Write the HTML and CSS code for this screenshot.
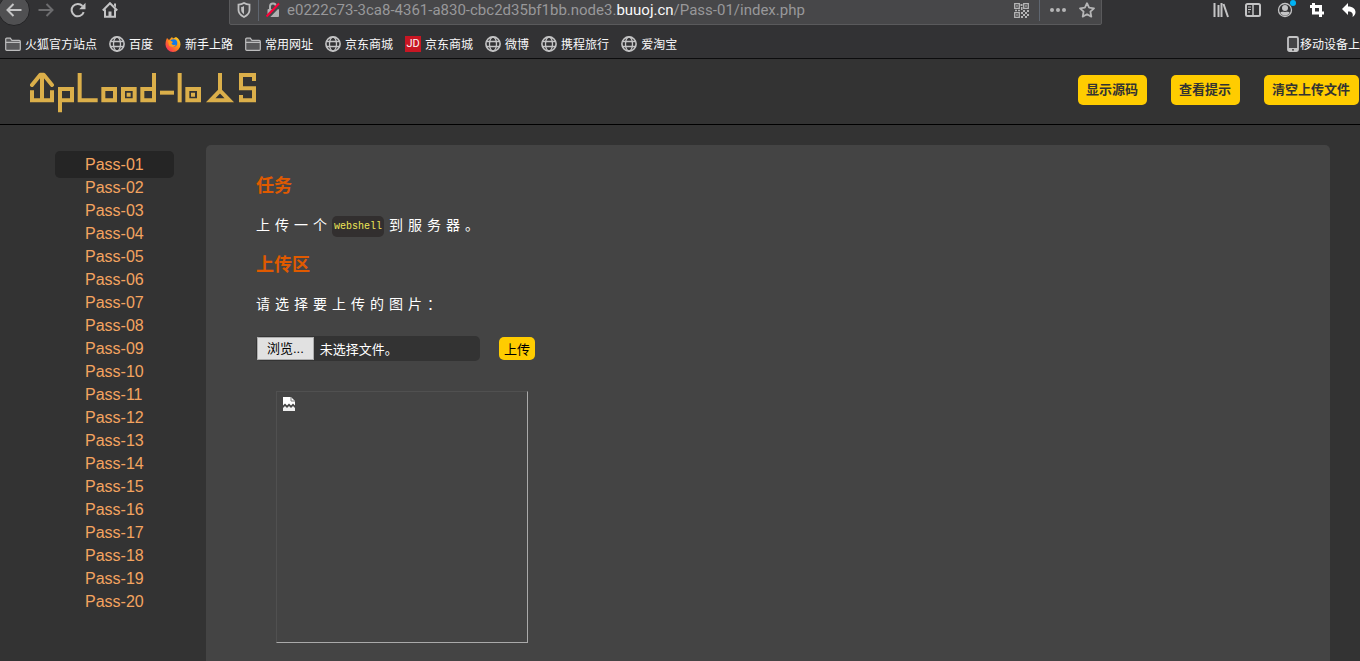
FILE: index.html
```
<!DOCTYPE html>
<html lang="zh-CN">
<head>
    <meta charset="UTF-8">
    <meta name="viewport" content="width=device-width, initial-scale=1.0">
    <title>upload-labs</title>
    <link rel="stylesheet" href="styles.css">
</head>
<body>
    <!-- shared icons -->
    <svg class="sprite" xmlns="http://www.w3.org/2000/svg">
        <symbol id="folder" viewBox="0 0 16 16">
            <path d="M.7 13.3V3.2a1 1 0 0 1 1-1h3.6l1.6 2.2h7.4a1 1 0 0 1 1 1v7.9a1 1 0 0 1-1 1H1.700a1 1 0 0 1-1-1zM.7 6.400h14.600" fill="#58585a" stroke="#bdbdbe" stroke-width="1.200" />
        </symbol>
        <symbol id="globe" viewBox="0 0 16 16">
            <g fill="none" stroke="#c4c4c5">
                <circle cx="8" cy="8" r="7.100" stroke-width="1.600" />
                <ellipse cx="8" cy="8" rx="3.500" ry="7" stroke-width="1.300" />
                <path d="M1.500 5.500h13M1.500 10.500h13" stroke-width="1.300" />
            </g>
        </symbol>
    </svg>

    <div class="browser">
        <div class="toolbar">
            <button class="tool tool--back" aria-label="后退">
                <svg width="16" height="16" viewBox="0 0 16 16"><path d="M15.500 8H1.500M7.500 2L1.500 8l6 6" /></svg>
            </button>
            <button class="tool tool--dim" aria-label="前进">
                <svg width="16" height="16" viewBox="0 0 16 16"><path d="M.5 8h14M8.500 2l6 6-6 6" /></svg>
            </button>
            <button class="tool" aria-label="刷新">
                <svg width="16" height="16" viewBox="0 0 16 16"><path d="M13.700 10.200A6.200 6.200 0 1 1 12.500 4" /><path class="solid" d="M15.500 .8v6.400H9.200z" /></svg>
            </button>
            <button class="tool" aria-label="主页">
                <svg width="16" height="16" viewBox="0 0 16 16"><path d="M.8 8.500L8 1.200l7.200 7.300M3 7.500v7.300h10V7.500M3 14.800" /><path class="solid" d="M6.500 15V9.500h3V15zM12 1.500h2v4l-2-2z" /></svg>
            </button>

            <div class="urlbar">
                <svg width="14" height="16" viewBox="0 0 14 16"><path d="M7 1C5.200 2.200 3.500 2.600 1.500 2.600V8c0 3.200 2.300 5.400 5.500 7 3.200-1.600 5.500-3.800 5.500-7V2.600C10.500 2.600 8.800 2.200 7 1z" fill="none" stroke="#c0c0c1" stroke-width="1.800" /><path d="M7 4v8.200C5.300 11 4.200 9.800 4.200 8V5C5.400 4.900 6.200 4.600 7 4z" fill="#c0c0c1" /></svg>
                <span class="urlbar__line"></span>
                <svg width="14" height="16" viewBox="1 0 14 16"><path d="M5 7V4.500a3 3 0 0 1 6 0V7" fill="none" stroke="#b0b0b1" stroke-width="2" /><rect x="2.500" y="7" width="11.500" height="8" rx="1" fill="#b0b0b1" /><path d="M2.500 15L15 2" stroke="#48484a" stroke-width="4" /><path d="M1.500 14.500L14 1.500" stroke="#ff0039" stroke-width="2" /></svg>
                <div class="urlbar__text" role="textbox" contenteditable="true" spellcheck="false" aria-label="地址">e0222c73-3ca8-4361-a830-cbc2d35bf1bb.node3.<span class="urlbar__host">buuoj.cn</span>/Pass-01/index.php</div>
                <button class="urlbar__btn" aria-label="二维码">
                    <svg width="15" height="15" viewBox="0 0 15 15"><g fill="none" stroke="#b5b5b6"><path d="M.7.700h4.600v4.600H.700zM9.700.700h4.600v4.600H9.700zM.7 9.700h4.600v4.600H.700z" stroke-width="1.300" /></g><path fill="#b5b5b6" d="M2.300 2.300h1.400v1.400H2.300zM11.300 2.300h1.400v1.400h-1.400zM2.300 11.300h1.400v1.400H2.300zM6.500 1h2v2h-2zM7 4h1.500v3H7zM1 6.700h2v1.500H1zM4 6.700h2v1.500H4zM9 7h2v2H9zM13 7h2v2h-2zM11 9h2v2h-2zM7 9h2v2H7zM9 11h2v2H9zM13 11h2v2h-2zM7 13h2v2H7zM11 13h2v2h-2z" /></svg>
                </button>
                <span class="urlbar__line"></span>
                <button class="urlbar__btn" aria-label="更多">
                    <svg width="16" height="16" viewBox="0 0 16 16" fill="#b5b5b6"><circle cx="2" cy="8" r="2" /><circle cx="8" cy="8" r="2" /><circle cx="14" cy="8" r="2" /></svg>
                </button>
                <button class="urlbar__btn" aria-label="收藏">
                    <svg width="16" height="16" viewBox="0 0 16 16"><path d="M8 1.200l2.100 4.500 4.900.6-3.600 3.400.9 4.900L8 12.200l-4.300 2.400.9-4.900L1 6.300l4.900-.6z" fill="none" stroke="#b5b5b6" stroke-width="1.800" stroke-linejoin="round" /></svg>
                </button>
            </div>

            <button class="tool" aria-label="书库">
                <svg width="16" height="16" viewBox="0 0 16 16"><path d="M1.500 1v14M5.500 3v12M8.500 1v14M10.500 2l4.500 13" /></svg>
            </button>
            <button class="tool" aria-label="侧栏">
                <svg width="16" height="16" viewBox="0 0 16 16"><rect x="1" y="2" width="14" height="12" rx="1.500" /><path d="M8 2v12" stroke-width="1.500" /><path d="M3 5h3M3 7.500h3M3 10h2" stroke-width="1" /></svg>
            </button>
            <button class="tool tool--account" aria-label="账户">
                <svg width="16" height="16" viewBox="0 0 16 16"><circle cx="8" cy="8" r="6.500" stroke-width="1.300" /><circle class="solid" cx="8" cy="6" r="3" /><path class="solid" d="M3.300 11c1-1.700 2.400-1 4.700-1s3.700-.7 4.700 1c-1 1.500-2.700 2.600-4.700 2.600S4.300 12.500 3.300 11z" /></svg>
                <span class="dot"></span>
            </button>
            <button class="tool tool--white" aria-label="截图">
                <svg width="16" height="16" viewBox="0 0 16 16"><path d="M4.500 1v10H15M1 4.500h10.500V15" stroke-width="3" /></svg>
            </button>
            <button class="tool tool--white" aria-label="撤销">
                <svg width="16" height="16" viewBox="0 0 16 16"><path class="solid" d="M7 1v3.500c5 0 7.500 2.500 7.500 5.500 0 2-1 3.600-3 5 1-3.500-.5-5.500-4.500-5.500V13L1 7z" /></svg>
            </button>
        </div>

        <nav class="bookmarks">
            <a href="#"><svg width="16" height="16"><use href="#folder" /></svg>火狐官方站点</a>
            <a href="#"><svg width="16" height="16"><use href="#globe" /></svg>百度</a>
            <a href="#">
                <svg width="16" height="16" viewBox="0 0 16 16">
                    <defs>
                        <linearGradient id="fox" x1="1" y1="0" x2="0" y2="1">
                            <stop offset="0" stop-color="#ffe226" />
                            <stop offset=".45" stop-color="#ff8a16" />
                            <stop offset="1" stop-color="#f5156c" />
                        </linearGradient>
                    </defs>
                    <path d="M2 2l2 2 3-3 1 1.500L11 1c2.700 1.500 4.500 4 4.500 7.500A7.500 7.500 0 0 1 .5 8.500C.5 6 1 4 2 2z" fill="url(#fox)" />
                    <circle cx="8.500" cy="7" r="3.800" fill="#1379e8" />
                    <path d="M3 5c2-1 3 0 5 1L6.500 7.500C7 9 9 9.500 11 8.500c-1 3-5 3-7 1z" fill="#ff9a1a" />
                </svg>新手上路</a>
            <a href="#"><svg width="16" height="16"><use href="#folder" /></svg>常用网址</a>
            <a href="#"><svg width="16" height="16"><use href="#globe" /></svg>京东商城</a>
            <a href="#"><span class="jd">JD</span>京东商城</a>
            <a href="#"><svg width="16" height="16"><use href="#globe" /></svg>微博</a>
            <a href="#"><svg width="16" height="16"><use href="#globe" /></svg>携程旅行</a>
            <a href="#"><svg width="16" height="16"><use href="#globe" /></svg>爱淘宝</a>
            <a href="#" class="mobile"><svg width="12" height="16" viewBox="0 0 12 16"><rect x="1" y="1" width="10" height="14" rx="1.500" fill="#444446" stroke="#c4c4c5" stroke-width="1.800" /><path d="M1 13.500h10" stroke="#c4c4c5" stroke-width="3" /><path d="M5 13.800h2" stroke="#323234" stroke-width="1.200" /></svg>移动设备上</a>
        </nav>
    </div>

    <header class="header">
        <a href="#" aria-label="upload-labs">
            <svg class="logo" width="230" height="42" viewBox="90 44 690 126">
                <g fill="none" stroke="#dbaf4a" stroke-width="12">
                    <path d="M96 102v30h60v-30M126 132V54" />
                    <path d="M96 86l25-31h10l25 31" stroke-linecap="round" stroke-linejoin="round" />
                    <path d="M180 168V98h36v34h-36" />
                    <path d="M239 50v82h54" />
                    <path d="M310 98h35v34h-35z" />
                    <path d="M369 98h35v34h-35z" />
                    <path d="M462 50v82h-35V98h35" />
                    <path d="M480 109h42" />
                    <path d="M539 50v88" />
                    <path d="M562 98h35v34h-35z" />
                    <path d="M660 50v50M660 103l-28 29h56z" />
                    <path d="M762 74V56h-39v40h39v36h-39v-16" />
                </g>
                <path d="M380 109h12v12h-12zM573 109h12v12h-12z" fill="#dbaf4a" />
            </svg>
        </a>
        <div class="header__actions">
            <button class="btn">显示源码</button>
            <button class="btn">查看提示</button>
            <button class="btn">清空上传文件</button>
        </div>
    </header>

    <main class="main">
        <ul class="menu">
            <li><a href="#" class="active">Pass-01</a></li>
            <li><a href="#">Pass-02</a></li>
            <li><a href="#">Pass-03</a></li>
            <li><a href="#">Pass-04</a></li>
            <li><a href="#">Pass-05</a></li>
            <li><a href="#">Pass-06</a></li>
            <li><a href="#">Pass-07</a></li>
            <li><a href="#">Pass-08</a></li>
            <li><a href="#">Pass-09</a></li>
            <li><a href="#">Pass-10</a></li>
            <li><a href="#">Pass-11</a></li>
            <li><a href="#">Pass-12</a></li>
            <li><a href="#">Pass-13</a></li>
            <li><a href="#">Pass-14</a></li>
            <li><a href="#">Pass-15</a></li>
            <li><a href="#">Pass-16</a></li>
            <li><a href="#">Pass-17</a></li>
            <li><a href="#">Pass-18</a></li>
            <li><a href="#">Pass-19</a></li>
            <li><a href="#">Pass-20</a></li>
        </ul>

        <section class="panel">
            <h3>任务</h3>
            <p>上传一个<code>webshell</code>到服务器。</p>
            <h3>上传区</h3>
            <form>
                <p id="upload-label">请选择要上传的图片：</p>
                <div class="upload">
                    <label class="file">
                        <input type="file" class="file__input" aria-labelledby="upload-label">
                        <span class="file__btn">浏览...</span>
                        <span>未选择文件。</span>
                    </label>
                    <button type="button" class="submit">上传</button>
                </div>
            </form>
            <div class="preview">
                <svg width="12" height="14" viewBox="0 0 12 14"><path d="M0 0h8l4 4v4.500l-2-2-2 2-2-2-2 2-2-2-2 2z" fill="#fff" /><path d="M8 0v4h4" fill="none" stroke="#777" /><path d="M0 11l2-2 2 2 2-2 2 2 2-2 2 2v3H0z" fill="#eee" /></svg>
            </div>
        </section>
    </main>
</body>
</html>
```
FILE: styles.css
```
* {
	box-sizing: border-box;
	margin: 0;
	padding: 0;
}

:root {
	--chrome: #323234;
	--bg: #333;
	--panel: #444;
	--yellow: #fc0;
	--icon: #c4c4c5;
	--cjk: "Noto Sans CJK SC", sans-serif;
}

body {
	min-height: 100vh;
	display: flex;
	flex-direction: column;
	background-color: var(--bg);
	color: #fff;
	font-family: "Liberation Sans", var(--cjk);
	overflow: hidden;
}

button {
	appearance: none;
	border: 0;
	cursor: pointer;
	font-family: var(--cjk);
}

a {
	text-decoration: none;
}

svg {
	display: block;
	flex-shrink: 0;
}

.sprite {
	display: none;
}

/* Browser bar */
.browser {
	background-color: var(--chrome);
	border-bottom: 1px solid #0c0c0d;
}

.toolbar {
	display: flex;
	align-items: center;
	height: 20px;
	margin: 0 -5px 0 -2px;
}

.tool {
	position: relative;
	display: flex;
	align-items: center;
	justify-content: center;
	flex-shrink: 0;
	width: 32px;
	height: 32px;
	background: none;
	color: var(--icon);
}

.tool svg {
	fill: none;
	stroke: currentColor;
	stroke-width: 2;
}

.tool .solid {
	fill: currentColor;
	stroke: none;
}

.tool--back {
	border: 1px solid #232325;
	border-radius: 50%;
	background-color: #505052;
}

.tool--dim {
	color: #6c6c6e;
}

.tool--white {
	color: #fff;
}

.dot {
	position: absolute;
	top: 6px;
	right: 5px;
	width: 6px;
	height: 6px;
	border-radius: 50%;
	background-color: #00b3f4;
}

.urlbar {
	flex: 1;
	min-width: 0;
	display: flex;
	align-items: center;
	gap: 7px;
	height: 30px;
	margin: 0 103px;
	padding: 0 3px 0 7px;
	background-color: #474749;
	border: 1px solid #5a5a5c;
	border-radius: 2px;
}

.urlbar__line {
	width: 1px;
	height: 22px;
	background-color: #5f6670;
}

.urlbar__text {
	flex: 1;
	min-width: 0;
	overflow: hidden;
	white-space: nowrap;
	outline: none;
	color: #98989a;
	font-family: Roboto, sans-serif;
	font-size: 15px;
	line-height: 20px;
}

.urlbar__host {
	color: #f9f9fa;
}

.urlbar__btn {
	background: none;
	padding: 0 3px;
}

.bookmarks {
	display: flex;
	align-items: center;
	gap: 12px;
	height: 28px;
	margin-top: 10px;
	padding-left: 5px;
}

.bookmarks a {
	display: flex;
	align-items: center;
	flex-shrink: 0;
	gap: 4px;
	color: #f9f9fa;
	font-family: var(--cjk);
	font-size: 12px;
	line-height: 16px;
}

.bookmarks .mobile {
	gap: 1px;
	margin-left: auto;
}

.jd {
	width: 16px;
	background-color: #c81623;
	font: 11px/16px Roboto, sans-serif;
	text-align: center;
}

/* Site header */
.header {
	display: flex;
	align-items: center;
	justify-content: space-between;
	height: 66px;
	padding: 0 1px 0 30px;
	border-bottom: 1px solid #000;
}

.header__actions {
	display: flex;
	gap: 24px;
	margin-bottom: 4px;
}

.btn {
	height: 30px;
	padding: 0 9px 2px 8px;
	border-radius: 5px;
	background-color: var(--yellow);
	color: var(--bg);
	font-size: 13px;
	font-weight: bold;
	line-height: 28px;
}

/* Content */
.main {
	flex: 1;
	display: flex;
	padding: 20px 30px 0 0;
}

.menu {
	width: 206px;
	flex-shrink: 0;
	padding: 8px 0 0 55px;
	list-style: none;
	line-height: 23px;
}

.menu a {
	padding: 5px 30px;
	border-radius: 5px;
	color: #f4a460;
	font-size: 16px;
}

.menu a.active {
	background-color: #252525;
}

.panel {
	flex: 1;
	padding: 29px 50px 18px;
	border-radius: 5px 5px 0 0;
	background-color: var(--panel);
}

.panel h3 {
	margin-bottom: 16px;
	color: #e05a00;
	font-size: 18px;
	line-height: 24px;
}

.panel p {
	margin-bottom: 16px;
	font-size: 14px;
	letter-spacing: 5px;
	line-height: 23px;
}

.panel code {
	display: inline-block;
	margin-right: 5px;
	padding: 0 2px;
	border-radius: 5px;
	background-color: #322f2f;
	color: #eee858;
	font: 10px/21px "Liberation Mono", monospace;
	letter-spacing: normal;
	vertical-align: middle;
}

.upload {
	display: flex;
	align-items: center;
	gap: 19px;
	margin-top: 20px;
}

.file {
	display: flex;
	align-items: center;
	gap: 6px;
	width: 224px;
	height: 25px;
	padding: 0 1px;
	border-radius: 5px;
	background-color: var(--bg);
	font-size: 13px;
	cursor: pointer;
}

.file__input {
	position: absolute;
	width: 1px;
	height: 1px;
	opacity: 0;
}

.file__btn {
	padding: 0 9px;
	border: 1px solid #adadad;
	background-color: #e1e1e1;
	color: #000;
	line-height: 21px;
}

.submit {
	height: 23px;
	padding: 0 5px;
	border-radius: 5px;
	background-color: var(--yellow);
	color: #000;
	font-size: 13px;
	line-height: 23px;
}

.preview {
	width: 252px;
	height: 252px;
	margin: 30px 20px 0;
	padding: 5px 6px;
	border: 1px solid;
	border-color: #505050 #aaa #aaa #505050;
}
```
